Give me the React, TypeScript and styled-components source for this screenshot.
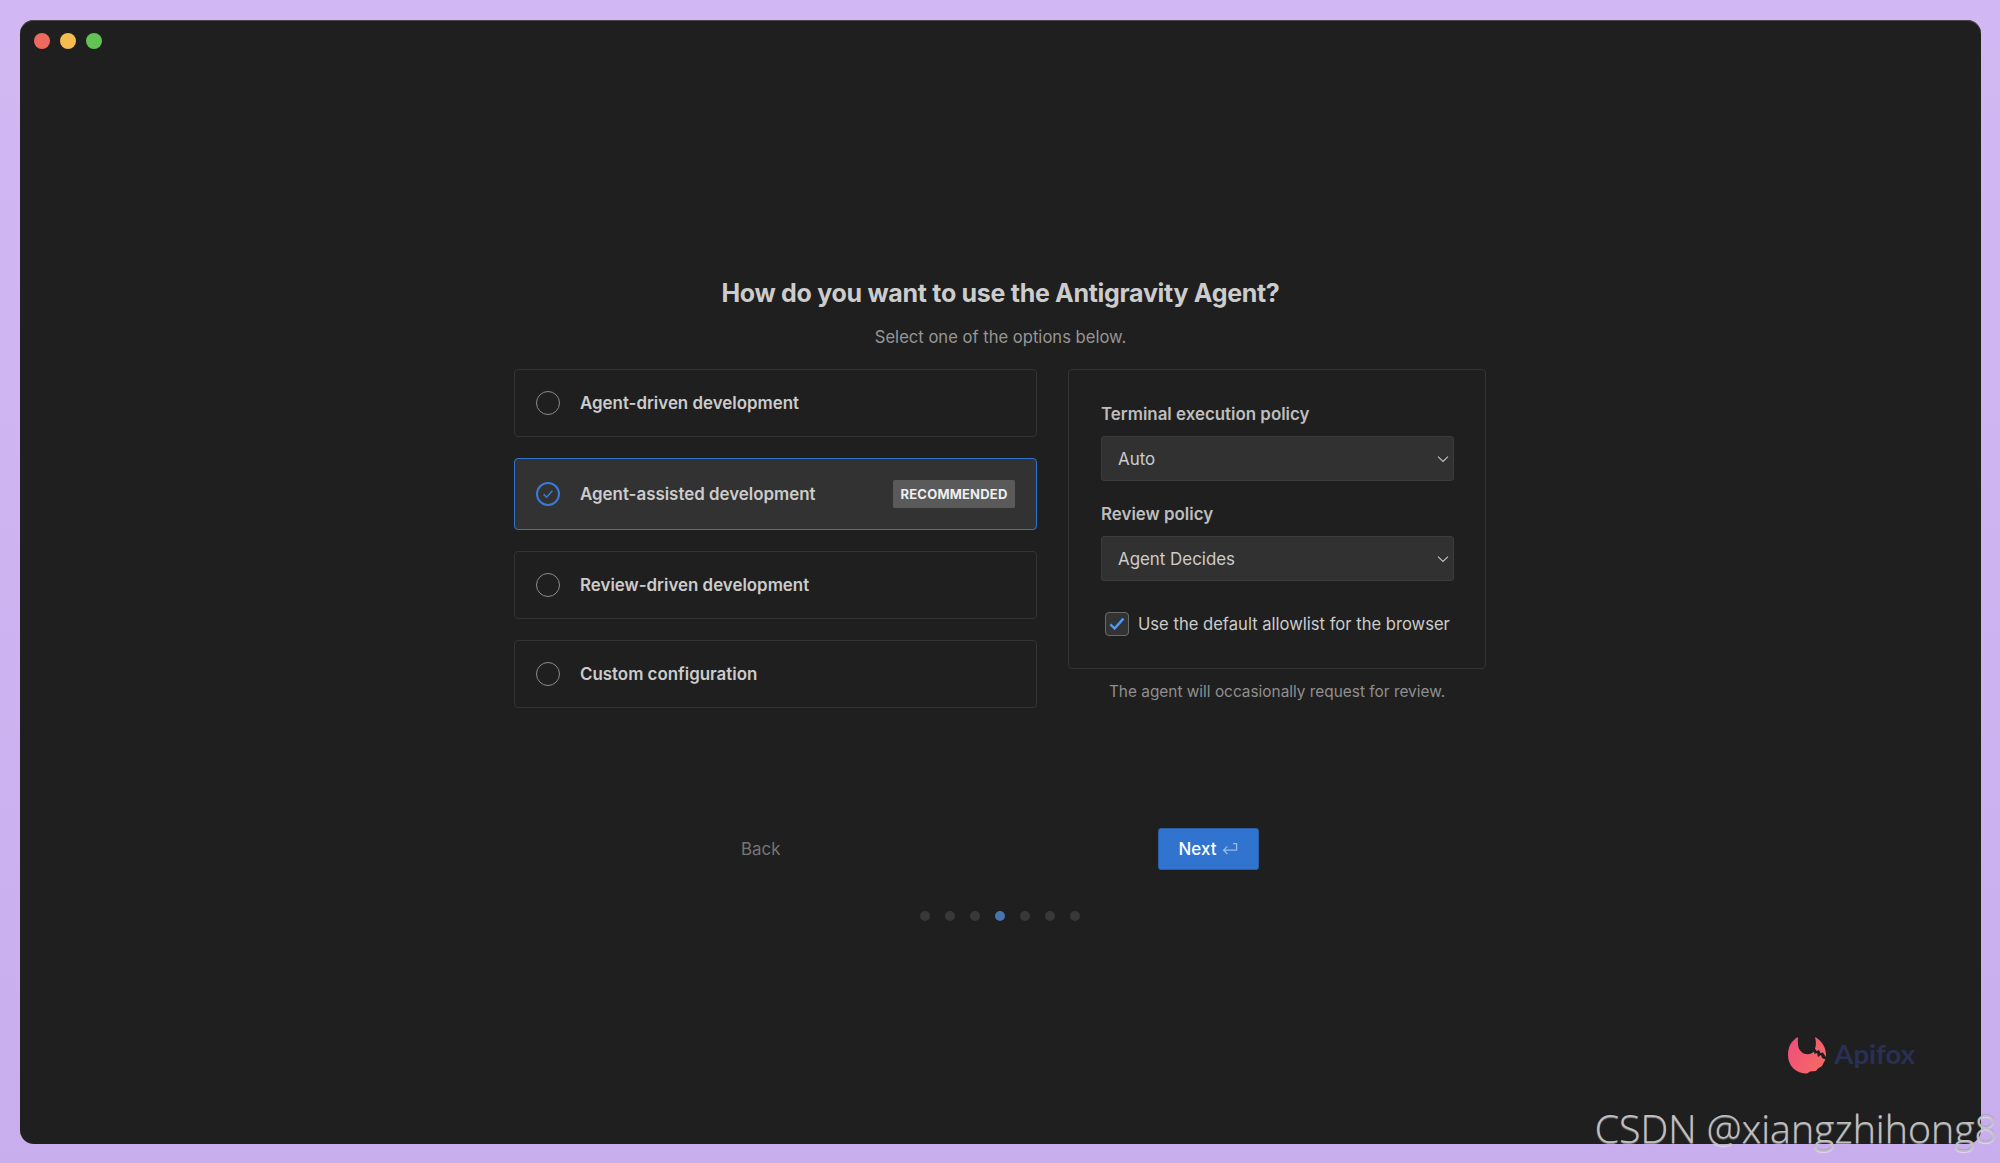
import React from 'react';
import styled, { createGlobalStyle } from 'styled-components';

const GlobalStyle = createGlobalStyle`
  html, body {
    margin: 0;
    padding: 0;
    height: 100%;
    background: #cdb4f0;
  }
  * {
    box-sizing: border-box;
  }
`;

const OPTIONS = [
  { id: 'driven', label: 'Agent-driven development' },
  { id: 'assisted', label: 'Agent-assisted development', badge: 'RECOMMENDED', selected: true },
  { id: 'review', label: 'Review-driven development' },
  { id: 'custom', label: 'Custom configuration' },
];

const POLICIES = [
  { label: 'Terminal execution policy', value: 'Auto' },
  { label: 'Review policy', value: 'Agent Decides' },
];

const STEPS = [0, 1, 2, 3, 4, 5, 6];

const Chevron = () => (
  <svg width="12" height="12" viewBox="0 0 12 12" fill="none" stroke="#c4c4c4" strokeWidth="1.1">
    <path d="M1 3.6 6 8.4 11 3.6" />
  </svg>
);

const RadioCheck = () => (
  <svg width="12" height="12" viewBox="0 0 12 12" fill="none" stroke="#3a7bd5" strokeWidth="1.5">
    <path d="M1.6 6.4 4.6 9.2 10.4 2.8" />
  </svg>
);

const BoxCheck = () => (
  <svg width="16" height="14" viewBox="0 0 16 14" fill="none" stroke="#4c9aff" strokeWidth="2.4">
    <path d="M1.4 7.4 5.6 11.6 14.4 1.6" />
  </svg>
);

const ReturnIcon = () => (
  <svg width="16" height="14" viewBox="0 0 16 14" fill="none" stroke="#9dbbe6" strokeWidth="1.2">
    <path d="M11 1.6H14.6V8.2H1.8M5.4 4.4 1.6 8.2 5.4 12" />
  </svg>
);

const FoxLogo = () => (
  <svg width="40" height="38" viewBox="0 0 40 38">
    <defs>
      <linearGradient id="foxFill" x1="0" y1="0.2" x2="1" y2="0.8">
        <stop offset="0" stopColor="#ef4f7c" />
        <stop offset="1" stopColor="#f56b62" />
      </linearGradient>
    </defs>
    <path
      fill="url(#foxFill)"
      d="M11 1 C4 5 1 11 1 19 C1 30 9 37.5 20 37.5 L23 35.5 L29 35 L31 32.5 L35 30 L37 26 L38.5 23.5 L35 22 L34 19 L31 21 L30 17 L27.5 18 L27 15.5 C22 21 12 18 11 9 C10.8 6 10.8 3.5 11 1 Z M28 1 C29 5 29.5 9 28 12.5 L29.5 15 L32 14 L33.5 17 L36 16.5 L38.8 21 C40 13 35 4.5 28 1 Z"
    />
  </svg>
);

export default function App() {
  return (
    <Page>
      <GlobalStyle />
      <Window>
        <TitleBar>
          <Light $color="#ee6a5f" />
          <Light $color="#f5bd4f" />
          <Light $color="#61c454" />
        </TitleBar>
        <Content>
          <Heading>How do you want to use the Antigravity Agent?</Heading>
          <Subheading>Select one of the options below.</Subheading>
          <Columns>
            <OptionList>
              {OPTIONS.map((option) => (
                <OptionCard key={option.id} $selected={option.selected}>
                  <Radio $selected={option.selected}>{option.selected && <RadioCheck />}</Radio>
                  <OptionLabel>{option.label}</OptionLabel>
                  {option.badge && <Badge>{option.badge}</Badge>}
                </OptionCard>
              ))}
            </OptionList>
            <SideColumn>
              <PolicyPanel>
                {POLICIES.map((policy) => (
                  <PolicyField key={policy.label}>
                    <PolicyLabel>{policy.label}</PolicyLabel>
                    <SelectBox>
                      {policy.value}
                      <Chevron />
                    </SelectBox>
                  </PolicyField>
                ))}
                <CheckRow>
                  <CheckBox>
                    <BoxCheck />
                  </CheckBox>
                  Use the default allowlist for the browser
                </CheckRow>
              </PolicyPanel>
              <PolicyHint>The agent will occasionally request for review.</PolicyHint>
            </SideColumn>
          </Columns>
          <Actions>
            <BackButton>Back</BackButton>
            <NextButton>
              Next
              <ReturnIcon />
            </NextButton>
          </Actions>
          <Dots>
            {STEPS.map((step) => (
              <Dot key={step} $active={step === 3} />
            ))}
          </Dots>
        </Content>
        <Brand>
          <FoxLogo />
          <BrandName>Apifox</BrandName>
        </Brand>
      </Window>
      <Watermark>CSDN @xiangzhihong8</Watermark>
    </Page>
  );
}

const Page = styled.div`
  position: relative;
  width: 2000px;
  height: 1163px;
  padding: 20px 19px 19px 20px;
  overflow: hidden;
  background: linear-gradient(180deg, #d1b8f3 0%, #c9aeee 100%);
  font-family: Inter, 'Liberation Sans', sans-serif;
`;

const Window = styled.div`
  position: relative;
  display: flex;
  flex-direction: column;
  height: 100%;
  border-radius: 14px;
  background: #1f1f1f;
  box-shadow: inset 0 1px 0 #4a4a4a;
`;

const TitleBar = styled.div`
  display: flex;
  gap: 10px;
  height: 42px;
  padding: 13px 0 0 14px;
`;

const Light = styled.span<{ $color: string }>`
  width: 16px;
  height: 16px;
  border-radius: 50%;
  background: ${(p) => p.$color};
`;

const Content = styled.div`
  display: flex;
  flex-direction: column;
  align-items: center;
  padding-top: 214px;
`;

const Heading = styled.h1`
  margin: 0;
  font-size: 25px;
  line-height: 34px;
  font-weight: 700;
  letter-spacing: -0.3px;
  color: #cccccc;
`;

const Subheading = styled.p`
  margin: 15px 0 0;
  font-size: 16.6px;
  line-height: 24px;
  color: #969696;
`;

const Columns = styled.div`
  display: flex;
  align-items: flex-start;
  gap: 31px;
  margin: 20px 0 0 -1px;
`;

const OptionList = styled.div`
  display: flex;
  flex-direction: column;
  gap: 21px;
  width: 523px;
`;

const OptionCard = styled.div<{ $selected?: boolean }>`
  display: flex;
  align-items: center;
  height: ${(p) => (p.$selected ? 72 : 68)}px;
  padding: 0 21px 0 21px;
  border: 1px solid ${(p) => (p.$selected ? '#2f74cf' : '#333333')};
  border-radius: 4px;
  background: ${(p) => (p.$selected ? '#323232' : 'transparent')};
`;

const Radio = styled.span<{ $selected?: boolean }>`
  display: flex;
  align-items: center;
  justify-content: center;
  flex-shrink: 0;
  width: 24px;
  height: 24px;
  border: ${(p) => (p.$selected ? '2px solid #3a7bd5' : '1px solid #8c8c8c')};
  border-radius: 50%;
`;

const OptionLabel = styled.span`
  flex: 1;
  margin-left: 20px;
  font-size: 16.9px;
  font-weight: 600;
  color: #cccccc;
`;

const Badge = styled.span`
  display: flex;
  align-items: center;
  height: 28px;
  padding: 0 7.5px;
  border-radius: 2px;
  background: #5a5a5a;
  font-size: 13px;
  font-weight: 700;
  letter-spacing: 0.2px;
  color: #eeeeee;
`;

const SideColumn = styled.div`
  display: flex;
  flex-direction: column;
  width: 418px;
`;

const PolicyPanel = styled.div`
  display: flex;
  flex-direction: column;
  height: 300px;
  padding: 34px 31px 0 32px;
  border: 1px solid #333333;
  border-radius: 4px;
`;

const PolicyField = styled.div`
  display: flex;
  flex-direction: column;
  margin-bottom: 23px;
`;

const PolicyLabel = styled.label`
  margin-bottom: 12px;
  font-size: 16.9px;
  line-height: 20px;
  font-weight: 600;
  color: #bdbdbd;
`;

const SelectBox = styled.div`
  display: flex;
  align-items: center;
  justify-content: space-between;
  height: 45px;
  padding: 0 4px 0 16px;
  border: 1px solid #3c3c3c;
  border-radius: 3px;
  background: #313131;
  font-size: 16.9px;
  color: #cccccc;
`;

const CheckRow = styled.div`
  display: flex;
  align-items: center;
  gap: 9px;
  margin: 8px 0 0 4px;
  font-size: 16.6px;
  white-space: nowrap;
  color: #cccccc;
`;

const CheckBox = styled.span`
  display: flex;
  align-items: center;
  justify-content: center;
  width: 24px;
  height: 24px;
  border: 1px solid #6a6a6a;
  border-radius: 4px;
  background: #333333;
`;

const PolicyHint = styled.p`
  margin: 13px 0 0;
  font-size: 15.4px;
  line-height: 20px;
  text-align: center;
  color: #8f8f8f;
`;

const Actions = styled.div`
  display: flex;
  align-items: center;
  justify-content: space-between;
  width: 518px;
  margin: 120px 0 0 -1px;
`;

const BackButton = styled.button`
  padding: 0;
  border: 0;
  background: none;
  font: inherit;
  font-size: 16.9px;
  color: #757575;
`;

const NextButton = styled.button`
  display: flex;
  align-items: center;
  justify-content: center;
  gap: 6px;
  width: 101px;
  height: 42px;
  padding: 0;
  border: 1px solid #2a5fa8;
  border-radius: 3px;
  background: #3174d0;
  font: inherit;
  font-size: 16.9px;
  font-weight: 500;
  color: #ffffff;
`;

const Dots = styled.div`
  display: flex;
  gap: 15px;
  margin: 41px 0 0 -2px;
`;

const Dot = styled.span<{ $active?: boolean }>`
  width: 10px;
  height: 10px;
  border-radius: 50%;
  background: ${(p) => (p.$active ? '#4674ad' : '#383838')};
`;

const Brand = styled.div`
  position: absolute;
  right: 66px;
  bottom: 70px;
  display: flex;
  align-items: center;
  gap: 7px;
`;

const BrandName = styled.span`
  margin-top: -3px;
  font-family: Lato, sans-serif;
  font-size: 27.5px;
  font-weight: 700;
  color: #2a2f55;
`;

const Watermark = styled.div`
  position: absolute;
  right: 3px;
  bottom: 13px;
  font-family: 'Open Sans', sans-serif;
  font-size: 39.3px;
  font-weight: 300;
  line-height: 44px;
  color: #c0c0c0;
  text-shadow: 0 1px 1px rgba(255, 255, 255, 0.5), 0 -1px 1px rgba(0, 0, 0, 0.12);
`;
